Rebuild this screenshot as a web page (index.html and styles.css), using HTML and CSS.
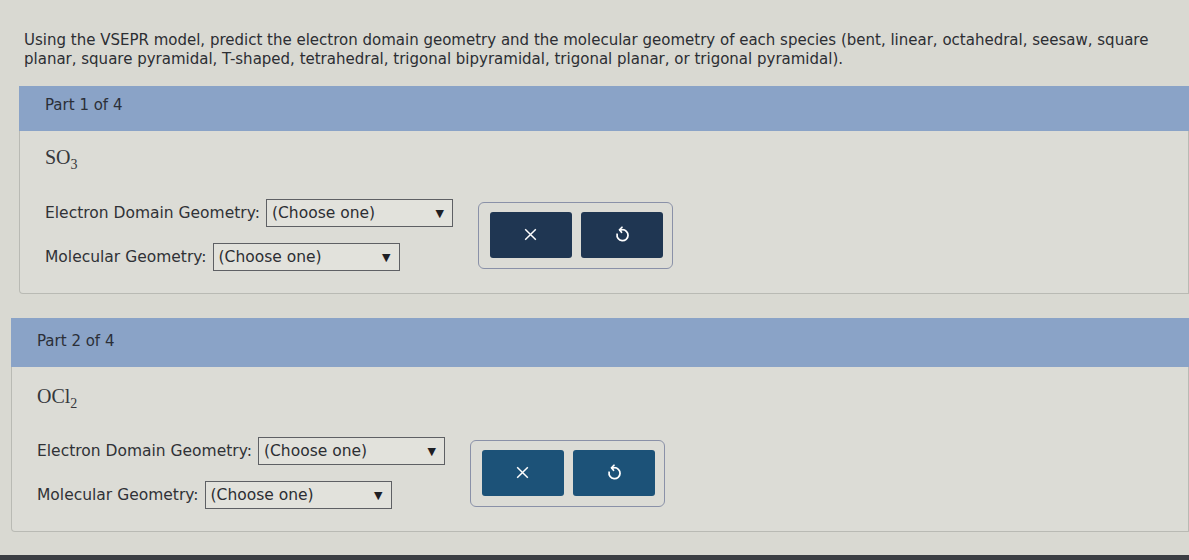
FILE: index.html
```html
<!DOCTYPE html>
<html>
<head>
<meta charset="utf-8">
<link rel="stylesheet" href="styles.css">
</head>
<body>
<div class="page">
  <p class="intro">Using the VSEPR model, predict the electron domain geometry and the molecular geometry of each species (bent, linear, octahedral, seesaw, square planar, square pyramidal, T-shaped, tetrahedral, trigonal bipyramidal, trigonal planar, or trigonal pyramidal).</p>

  <section class="part part-one">
    <div class="part-head">Part 1 of 4</div>
    <div class="part-body">
      <div class="formula">SO<sub>3</sub></div>
      <div class="work">
        <div class="fields">
          <div class="field"><span class="label">Electron Domain Geometry:</span><span class="select"><span>(Choose one)</span><span class="caret">&#9660;</span></span></div>
          <div class="field"><span class="label">Molecular Geometry:</span><span class="select"><span>(Choose one)</span><span class="caret">&#9660;</span></span></div>
        </div>
        <div class="actions">
          <button class="btn" aria-label="clear"><svg viewBox="0 0 16 16" width="17" height="17"><path d="M3 3 L13 13 M13 3 L3 13" stroke="#fff" stroke-width="1.4" fill="none"/></svg></button>
          <button class="btn" aria-label="undo"><svg viewBox="0 0 16 16" width="20" height="20"><path d="M6.2 3.8 H8.2 A4.4 4.4 0 1 1 4.1 7.4" stroke="#fff" stroke-width="1.4" fill="none" stroke-linecap="round"/><path d="M8 1.8 L6 3.8 L7.6 5.8" stroke="#fff" stroke-width="1.4" fill="none" stroke-linecap="round" stroke-linejoin="round"/></svg></button>
        </div>
      </div>
    </div>
  </section>

  <section class="part part-two">
    <div class="part-head">Part 2 of 4</div>
    <div class="part-body">
      <div class="formula">OCl<sub>2</sub></div>
      <div class="work">
        <div class="fields">
          <div class="field"><span class="label">Electron Domain Geometry:</span><span class="select"><span>(Choose one)</span><span class="caret">&#9660;</span></span></div>
          <div class="field"><span class="label">Molecular Geometry:</span><span class="select"><span>(Choose one)</span><span class="caret">&#9660;</span></span></div>
        </div>
        <div class="actions">
          <button class="btn" aria-label="clear"><svg viewBox="0 0 16 16" width="17" height="17"><path d="M3 3 L13 13 M13 3 L3 13" stroke="#fff" stroke-width="1.4" fill="none"/></svg></button>
          <button class="btn" aria-label="undo"><svg viewBox="0 0 16 16" width="20" height="20"><path d="M6.2 3.8 H8.2 A4.4 4.4 0 1 1 4.1 7.4" stroke="#fff" stroke-width="1.4" fill="none" stroke-linecap="round"/><path d="M8 1.8 L6 3.8 L7.6 5.8" stroke="#fff" stroke-width="1.4" fill="none" stroke-linecap="round" stroke-linejoin="round"/></svg></button>
        </div>
      </div>
    </div>
  </section>
  <div class="bezel"></div>
</div>
</body>
</html>
```

FILE: styles.css
```css
html, body {
  margin: 0;
  padding: 0;
}
body {
  background: #d9d9d2;
  font-family: "DejaVu Sans", Verdana, sans-serif;
  color: #303236;
  height: 560px;
  overflow: hidden;
}
.page {
  padding-top: 31px;
}
.intro {
  margin: 0 20px 0 24px;
  font-size: 15px;
  line-height: 19px;
  color: #2c2e33;
}
.part {
  margin-top: 17px;
}
.part-one {
  margin-left: 19px;
}
.part-two {
  margin-left: 11px;
  margin-top: 24px;
}
.part-head {
  height: 45px;
  background: #8aa3c7;
  padding-left: 26px;
  font-size: 15px;
  line-height: 38px;
  color: #2b2f38;
}
.part-two .part-head {
  height: 49px;
  line-height: 46px;
}
.part-body {
  background: #dcdcd6;
  border: 1px solid #b9bab4;
  border-top: none;
  border-radius: 0 0 0 4px;
  padding: 14px 0 0 25px;
  height: 148px;
}
.part-two .part-body {
  padding-top: 17px;
  height: 147px;
}
.formula {
  font-family: "Liberation Serif", "Times New Roman", serif;
  font-size: 20px;
  color: #35373b;
  line-height: 24px;
}
.formula sub {
  font-size: 14px;
  vertical-align: -5px;
}
.work {
  display: flex;
  align-items: center;
  gap: 25px;
  margin-top: 22px;
}
.part-two .work {
  margin-top: 21px;
}
.fields {
  display: flex;
  flex-direction: column;
  gap: 16px;
}
.field {
  display: flex;
  align-items: center;
  gap: 6px;
  font-size: 15.5px;
}
.select {
  display: flex;
  align-items: center;
  justify-content: space-between;
  width: 187px;
  height: 28px;
  box-sizing: border-box;
  border: 1px solid #5e6064;
  background: #e2e2dc;
  padding: 0 8px 0 5px;
  font-size: 15.5px;
  color: #2c2e33;
}
.select .caret {
  font-size: 11px;
  color: #1e2024;
}
.actions {
  display: flex;
  gap: 9px;
  padding: 9px 9px 10px 11px;
  border: 1px solid #8a91a8;
  border-radius: 6px;
}
.btn {
  width: 82px;
  height: 46px;
  border: none;
  border-radius: 3px;
  background: #1f3652;
  display: flex;
  align-items: center;
  justify-content: center;
  padding: 0;
}
.part-two .btn {
  background: #1c5278;
}
.bezel {
  margin-top: 23px;
  height: 6px;
  background: #3c3f44;
}
```
